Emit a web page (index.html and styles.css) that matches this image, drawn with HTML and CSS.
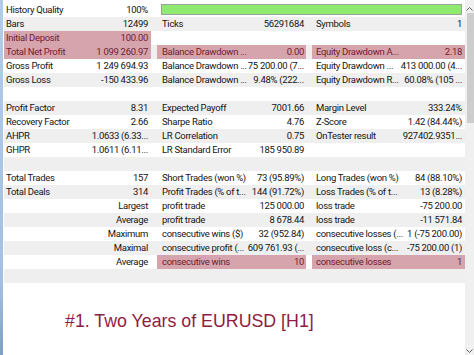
FILE: index.html
```html
<!DOCTYPE html>
<html>
<head>
<meta charset="utf-8">
<link rel="stylesheet" href="styles.css">
</head>
<body>
<div class="window">
  <div class="edge"></div>
  <div class="pane">
    <div class="report">
      <div class="row">
        <div class="cell c1"><span>History Quality</span><span>100%</span></div>
        <div class="barcell"><div class="quality"></div></div>
      </div>
      <div class="row alt">
        <div class="cell c1"><span>Bars</span><span>12499</span></div>
        <div class="cell c2"><span>Ticks</span><span>56291684</span></div>
        <div class="cell c3"><span>Symbols</span><span>1</span></div>
      </div>
      <div class="row">
        <div class="cell c1 hl"><span>Initial Deposit</span><span>100.00</span></div>
        <div class="cell c2"></div>
        <div class="cell c3"></div>
      </div>
      <div class="row alt">
        <div class="cell c1 hl"><span>Total Net Profit</span><span>1 099 260.97</span></div>
        <div class="cell c2 hl"><span>Balance Drawdown ...</span><span>0.00</span></div>
        <div class="cell c3 hl"><span>Equity Drawdown A...</span><span>2.18</span></div>
      </div>
      <div class="row">
        <div class="cell c1"><span>Gross Profit</span><span>1 249 694.93</span></div>
        <div class="cell c2"><span>Balance Drawdown ...</span><span>75 200.00 (7...</span></div>
        <div class="cell c3"><span>Equity Drawdown ...</span><span>413 000.00 (4...</span></div>
      </div>
      <div class="row alt">
        <div class="cell c1"><span>Gross Loss</span><span>-150 433.96</span></div>
        <div class="cell c2"><span>Balance Drawdown ...</span><span>9.48% (222...</span></div>
        <div class="cell c3"><span>Equity Drawdown R...</span><span>60.08% (105 ...</span></div>
      </div>
      <div class="row"></div>
      <div class="row alt">
        <div class="cell c1"><span>Profit Factor</span><span>8.31</span></div>
        <div class="cell c2"><span>Expected Payoff</span><span>7001.66</span></div>
        <div class="cell c3"><span>Margin Level</span><span>333.24%</span></div>
      </div>
      <div class="row">
        <div class="cell c1"><span>Recovery Factor</span><span>2.66</span></div>
        <div class="cell c2"><span>Sharpe Ratio</span><span>4.76</span></div>
        <div class="cell c3"><span>Z-Score</span><span>1.42 (84.44%)</span></div>
      </div>
      <div class="row alt">
        <div class="cell c1"><span>AHPR</span><span>1.0633 (6.33...</span></div>
        <div class="cell c2"><span>LR Correlation</span><span>0.75</span></div>
        <div class="cell c3"><span>OnTester result</span><span>927402.9351...</span></div>
      </div>
      <div class="row">
        <div class="cell c1"><span>GHPR</span><span>1.0611 (6.11...</span></div>
        <div class="cell c2"><span>LR Standard Error</span><span>185 950.89</span></div>
        <div class="cell c3"></div>
      </div>
      <div class="row alt"></div>
      <div class="row">
        <div class="cell c1"><span>Total Trades</span><span>157</span></div>
        <div class="cell c2"><span>Short Trades (won %)</span><span>73 (95.89%)</span></div>
        <div class="cell c3"><span>Long Trades (won %)</span><span>84 (88.10%)</span></div>
      </div>
      <div class="row alt">
        <div class="cell c1"><span>Total Deals</span><span>314</span></div>
        <div class="cell c2"><span>Profit Trades (% of t...</span><span>144 (91.72%)</span></div>
        <div class="cell c3"><span>Loss Trades (% of t...</span><span>13 (8.28%)</span></div>
      </div>
      <div class="row">
        <div class="cell c1 right"><span>Largest</span></div>
        <div class="cell c2"><span>profit trade</span><span>125 000.00</span></div>
        <div class="cell c3"><span>loss trade</span><span>-75 200.00</span></div>
      </div>
      <div class="row alt">
        <div class="cell c1 right"><span>Average</span></div>
        <div class="cell c2"><span>profit trade</span><span>8 678.44</span></div>
        <div class="cell c3"><span>loss trade</span><span>-11 571.84</span></div>
      </div>
      <div class="row">
        <div class="cell c1 right"><span>Maximum</span></div>
        <div class="cell c2"><span>consecutive wins ($)</span><span>32 (952.84)</span></div>
        <div class="cell c3"><span>consecutive losses (...</span><span>1 (-75 200.00)</span></div>
      </div>
      <div class="row alt">
        <div class="cell c1 right"><span>Maximal</span></div>
        <div class="cell c2"><span>consecutive profit (...</span><span>609 761.93 (...</span></div>
        <div class="cell c3"><span>consecutive loss (c...</span><span>-75 200.00 (1)</span></div>
      </div>
      <div class="row">
        <div class="cell c1 right"><span>Average</span></div>
        <div class="cell c2 hl"><span>consecutive wins</span><span>10</span></div>
        <div class="cell c3 hl"><span>consecutive losses</span><span>1</span></div>
      </div>
      <div class="row alt"></div>
    </div>
    <div class="title">#1. Two Years of EURUSD [H1]</div>
  </div>
  <div class="scroll">
    <svg class="arrow up" width="9" height="8" viewBox="0 0 9 8"><path d="M1.5 5.5 L4.5 2.5 L7.5 5.5" fill="none" stroke="#606060" stroke-width="1"/></svg>
    <div class="thumb"></div>
    <div class="track"></div>
    <svg class="arrow" width="9" height="8" viewBox="0 0 9 8"><path d="M1.5 2.5 L4.5 5.5 L7.5 2.5" fill="none" stroke="#606060" stroke-width="1"/></svg>
  </div>
</div>
</body>
</html>
```
FILE: styles.css
```css
html, body {
  margin: 0;
  padding: 0;
  background: #ffffff;
}
.window {
  display: flex;
  width: 474px;
  height: 355px;
  overflow: hidden;
  font-family: Roboto, sans-serif;
  font-size: 9.5px;
  letter-spacing: -0.3px;
  color: #141414;
}
.edge {
  width: 3px;
  flex: none;
  background: linear-gradient(#b3cce6, #a4c0e0 80%, #7f9fc8);
}
.pane {
  flex: 1;
  padding-left: 1px;
  padding-top: 3px;
  display: flex;
  flex-direction: column;
}
.report {
  display: flex;
  flex-direction: column;
}
.row {
  height: 14px;
  display: grid;
  grid-template-columns: 147px 149px 153px;
  column-gap: 6px;
  line-height: 14px;
}
.row.alt {
  background: #efefef;
}
.cell {
  display: flex;
  justify-content: space-between;
  white-space: nowrap;
  overflow: hidden;
  padding-right: 3px;
}
.c1 { padding-left: 2px; }
.c2 { padding-left: 5px; padding-right: 2px; }
.c3 { padding-left: 4px; }
.cell.right { justify-content: flex-end; }
.cell.hl {
  background: #d6a4ad;
  color: #72202f;
}
.barcell {
  grid-column: 2 / 4;
  padding: 1px 3px 1px 4px;
}
.quality {
  height: 11px;
  border: 1px solid #9aa39a;
  background: #90ea70;
  box-sizing: border-box;
}
.title {
  margin-top: 27px;
  padding-left: 61px;
  font-family: "Liberation Sans", Arial, sans-serif;
  font-size: 17.8px;
  letter-spacing: 0;
  line-height: 22px;
  color: #8e1d3f;
}
.scroll {
  width: 9px;
  flex: none;
  background: #f0f0f0;
  display: flex;
  flex-direction: column;
}
.arrow { flex: none; margin-top: 5px; }
.arrow.up { margin-top: 5px; }
.thumb {
  height: 110px;
  margin: 0 0 0 2px;
  background: #cdcdcd;
  flex: none;
}
.track { flex: 1; }
```
